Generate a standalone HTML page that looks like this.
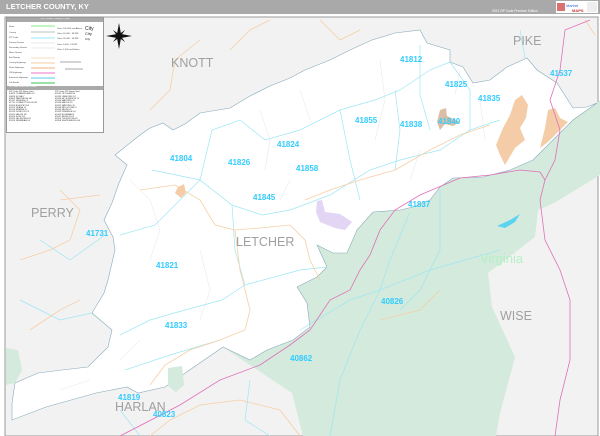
<!DOCTYPE html>
<html><head><meta charset="utf-8"><style>
*{margin:0;padding:0}
body{width:600px;height:436px;overflow:hidden;background:#fff;font-family:"Liberation Sans",sans-serif;position:relative}
#hdr{position:absolute;left:0;top:0;width:600px;height:14px;background:#a9a9a9}
#hdr .t{position:absolute;left:6px;top:2px;color:#fff;font-weight:bold;font-size:7.5px}
#hdr .e{position:absolute;left:492px;top:9px;color:#fff;font-size:3.2px}
#logo{position:absolute;left:556px;top:1px;width:42px;height:12px;background:#fff}
svg{position:absolute;left:0;top:0}
.lb{font-family:"Liberation Sans",sans-serif;font-weight:bold;fill:#33ccff;font-size:8px}
.cn{font-family:"Liberation Sans",sans-serif;fill:#a0a0a0;font-size:12.5px}
#leg{position:absolute;left:6px;top:17px;width:96px;height:114px;background:#fff;border:1px solid #999;font-size:2.2px;color:#333;overflow:hidden}
</style></head><body>
<div id="hdr"><div class="t">LETCHER COUNTY, KY</div><div class="e">2023 ZIP Code Premium Edition</div>
<div id="logo"><svg width="42" height="12"><rect x="1" y="2" width="8" height="8" fill="#c33" opacity=".7"/><text x="10" y="6" font-size="4" fill="#36c" font-style="italic">Market</text><text x="16" y="11" font-size="4" fill="#c33" font-weight="bold">MAPS</text><rect x="31" y="1" width="10" height="10" fill="#eee"/></svg></div></div>
<svg width="600" height="436" viewBox="0 0 600 436">
<rect x="5" y="17" width="593" height="419" fill="#f2f2f2" stroke="#999" stroke-width="1"/>
<polygon fill="#d3eadc" points="600,100 597,103 573,120 553,140 533,160 510,170 483,177 453,178 440,187 430,200 413,207 400,210 373,212 357,230 347,253 333,253 317,245 327,267 317,277 297,287 307,303 310,327 293,340 267,350 250,360 223,347 292,393 303,436 496,436 500,413 515,357 492,307 488,273 535,237 538,210 554,203 600,175"/>
<polygon fill="#fff" stroke="#8ab" stroke-width="0.6" points="150,128 163,123 173,130 185,124 200,113 230,108 250,96 270,86 290,78 305,70 330,60 350,50 372,40 395,33 420,30 427,43 450,50 450,62 463,67 473,83 490,80 507,67 527,58 537,70 557,83 573,108 587,107 597,103 573,120 553,140 533,160 510,170 483,177 453,178 440,187 430,200 413,207 400,210 373,212 357,230 347,253 333,253 317,245 327,267 317,277 297,287 307,303 310,327 293,340 267,350 250,360 223,347 165,387 138,393 127,387 96,393 46,407 12,420 12,403 15,383 38,373 62,370 88,367 108,347 112,330 92,313 104,293 108,280 115,250 113,237 104,220 112,203 119,183 127,165 115,155 140,135"/>
<polygon fill="#d3eadc" points="168,368 182,366 184,385 176,392 168,386"/>
<polygon fill="#d3eadc" points="6,348 18,350 22,370 15,383 6,385"/>
<polygon fill="#f4cda8" points="515,100 522,95 528,105 526,118 520,128 525,140 515,148 505,165 500,155 496,145 503,128 510,115"/>
<polygon fill="#f4cda8" points="548,110 555,108 560,118 568,122 558,132 548,142 540,148 545,128"/>
<polygon fill="#d8bfa6" points="440,110 446,108 447,116 460,122 453,126 445,124 440,130 437,122"/>
<polygon fill="#e2d6f4" points="317,201 322,200 325,212 340,214 352,222 345,230 335,228 320,222 316,212"/>
<polygon fill="#f4cda8" points="178,187 184,184 186,193 181,198 175,193"/>
<path d="M497,226 L510,220 520,214 515,222 505,228 Z" fill="#5cd3f0"/>
<g fill="none" stroke="#ddd" stroke-width="0.4">
<path d="M130,180 L150,200 L160,230 L150,260 M170,150 L190,170 M260,110 L270,140 L265,170 M300,90 L310,120 M380,60 L385,100 L375,140 M460,70 L455,95 M200,250 L210,290 L200,320 M60,390 L90,380 M120,360 L140,340 M280,200 L290,180 M420,150 L410,180 M480,100 L485,140 M350,260 L370,250 M400,260 L420,240 M430,320 L450,300 M340,380 L360,360"/>
</g>
<g fill="none" stroke="#9ee6f4" stroke-width="0.7">
<path d="M152,170 L200,180 L232,205 L262,215 L290,210 L330,195 L370,170 L400,160 L440,150 L470,130 L500,120"/>
<path d="M200,180 L212,130 L240,120 L265,140 L300,130 L340,110 L375,100 L400,90 L430,70 L450,62"/>
<path d="M232,205 L235,250 L245,285 L222,300 L185,310 L150,320 L120,335"/>
<path d="M120,235 L155,225 L200,180"/>
<path d="M245,285 L300,270 L327,267"/>
<path d="M340,110 L350,160 L360,200"/>
<path d="M395,90 L400,130 L395,170"/>
<path d="M420,45 L420,95 L430,130"/>
<path d="M450,62 L470,90 L470,130"/>
<path d="M125,370 L170,355 L220,340"/>
<path d="M410,212 L390,260 L380,290 L360,330 L340,380 L330,436"/>
<path d="M440,190 L440,250 L420,290 L400,310"/>
<path d="M300,330 L350,300 L380,290 L430,270 L500,250"/>
<path d="M40,240 L70,260 L105,235 M20,300 L60,320 L92,313"/>
<path d="M250,380 L245,420 L270,436 M120,410 L140,436"/>
<path d="M520,30 L525,58"/>
</g>
<g fill="none" stroke="#f6cfa6" stroke-width="0.8">
<path d="M140,190 L175,185 L200,200 L215,225 L235,230 L260,228 L290,225 L305,240 L310,260 L320,280"/>
<path d="M235,230 L240,270 L250,310 L245,330 L220,340 L190,350 L165,365 L150,385"/>
<path d="M305,200 L330,190 L360,180 L395,170 L430,150 L460,135 L490,125"/>
<path d="M150,110 L170,90 L175,60 L200,40 M230,50 L250,30 L270,20 M320,20 L340,40 L360,30"/>
<path d="M20,260 L50,250 L70,240 L80,210 L60,190 M30,330 L60,310 L80,300 M60,200 L100,195"/>
<path d="M300,436 L280,410 L240,400 L200,405 L170,420 L150,436"/>
<path d="M380,320 L420,310 L440,290 M585,20 L595,35"/>
</g>
<g fill="none" stroke="#e070b8" stroke-width="0.8">
<path d="M120,436 L180,405 L220,380 L260,365 L290,345 L310,330 L330,300 L350,290 L360,270 L370,255 L380,230 L395,210 L420,195 L460,178 L490,175 L520,170 L540,172 L545,180 L540,200 L545,240 L560,270 L570,300 L570,360 L560,400 L555,436"/>
<path d="M545,180 L555,160 L560,130 L550,100 L560,70 L565,30 L590,20"/>
</g>
<text class="cn" x="171" y="67">KNOTT</text>
<text class="cn" x="513" y="45">PIKE</text>
<text class="cn" x="31" y="217">PERRY</text>
<text class="cn" x="236" y="246">LETCHER</text>
<text class="cn" x="500" y="320">WISE</text>
<text class="cn" x="115" y="411">HARLAN</text>
<text x="480" y="263" font-size="13" fill="#b5f0c8" font-family="Liberation Sans,sans-serif">Virginia</text>
<g>
<text x="400" y="62" class="lb">41812</text>
<text x="445" y="87" class="lb">41825</text>
<text x="478" y="101" class="lb">41835</text>
<text x="550" y="76" class="lb">41537</text>
<text x="438" y="124" class="lb">41840</text>
<text x="400" y="127" class="lb">41838</text>
<text x="355" y="123" class="lb">41855</text>
<text x="277" y="147" class="lb">41824</text>
<text x="170" y="161" class="lb">41804</text>
<text x="228" y="165" class="lb">41826</text>
<text x="296" y="171" class="lb">41858</text>
<text x="253" y="200" class="lb">41845</text>
<text x="408" y="207" class="lb">41837</text>
<text x="86" y="236" class="lb">41731</text>
<text x="156" y="268" class="lb">41821</text>
<text x="381" y="304" class="lb">40826</text>
<text x="165" y="328" class="lb">41833</text>
<text x="290" y="361" class="lb">40862</text>
<text x="118" y="400" class="lb">41819</text>
<text x="153" y="417" class="lb">40823</text>
</g>
<g transform="translate(119,36)" fill="#111">
<polygon points="0,-13 2,-2 0,0 -2,-2"/><polygon points="0,13 2,2 0,0 -2,2"/>
<polygon points="-13,0 -2,-2 0,0 -2,2"/><polygon points="13,0 2,-2 0,0 2,2"/>
<polygon points="-6,-6 1,-1 -1,1" /><polygon points="6,6 -1,1 1,-1"/>
<polygon points="6,-6 1,1 -1,-1"/><polygon points="-6,6 -1,-1 1,1"/>
</g>
</svg>
<div id="leg">
<div style="background:#a9a9a9;height:4px;color:#fff;text-align:center">2023 Letcher County, KY Map</div>
<svg width="96" height="62" style="position:relative">
<g stroke-width="1.2" fill="none">
<line x1="24" y1="4" x2="48" y2="4" stroke="#9ef0a0"/>
<line x1="24" y1="10" x2="48" y2="10" stroke="#ccc"/>
<line x1="24" y1="16" x2="48" y2="16" stroke="#aeeefa"/>
<line x1="24" y1="21" x2="48" y2="21" stroke="#eee"/>
<line x1="24" y1="26" x2="48" y2="26" stroke="#eee"/>
<line x1="24" y1="36" x2="48" y2="36" stroke="#fbe2cc"/>
<line x1="24" y1="41" x2="48" y2="41" stroke="#f7d5b0"/>
<line x1="24" y1="46" x2="48" y2="46" stroke="#f6c296"/>
<line x1="24" y1="51" x2="48" y2="51" stroke="#f08fd0"/>
<line x1="24" y1="56" x2="48" y2="56" stroke="#7ad6ee"/>
<line x1="24" y1="61" x2="48" y2="61" stroke="#5ed17a"/>
<line x1="53" y1="40" x2="74" y2="40" stroke="#555" stroke-width=".5"/>
<line x1="58" y1="47" x2="76" y2="47" stroke="#555" stroke-width=".5"/>
</g>
<g font-size="2.2" fill="#444" font-family="Liberation Sans,sans-serif">
<text x="2" y="5">State</text><text x="2" y="11">County</text><text x="2" y="16">ZIP Code</text><text x="2" y="21">Primary Streets</text><text x="2" y="26">Secondary Streets</text><text x="2" y="31">Minor Streets</text><text x="2" y="36">Exit Ramps</text><text x="2" y="41">County Highways</text><text x="2" y="46">State Highways</text><text x="2" y="51">US Highways</text><text x="2" y="56">Interstate Highways</text><text x="2" y="61">Toll Roads</text>
<text x="50" y="7">Cities 100,000 and Above</text><text x="50" y="12">Cities 50,000 - 99,999</text><text x="50" y="17">Cities 25,000 - 49,999</text><text x="50" y="23">Cities 5,000 - 24,999</text><text x="50" y="28">Cities 1,000 and Below</text>
</g>
<g font-family="Liberation Sans,sans-serif" fill="#222"><text x="78" y="8" font-size="5">City</text><text x="78" y="13" font-size="4">City</text><text x="78" y="18" font-size="3">City</text></g>
</svg>
<div style="background:#a9a9a9;height:4px;color:#fff;padding-left:2px;margin-top:1px">ZIP Code Index/Grid Locator</div>
<div style="display:flex;line-height:2.25px;padding:1px 2px">
<div style="width:46px">ZIP Code ZIP Name Grid<br>40823 CUMBERLAND D9<br>40826 EOLIA I7<br>40862 PARTRIDGE H9<br>41537 JENKINS L3<br>41731 CORNETTSVILLE B5<br>41804 BLACKEY E4<br>41812 DEANE J1<br>41815 ERMINE I5<br>41819 GORDON C9<br>41821 HALLIE D6<br>41824 ISOM G3<br>41825 JACKHORN K2<br>41826 JEREMIAH F4</div>
<div style="width:46px">ZIP Code ZIP Name Grid<br>41832 LETCHER E4<br>41833 LINEFORK D7<br>41834 MC ROBERTS L3<br>41835 MAYKING J3<br>41836 MALLIE F2<br>41837 MAYKING J5<br>41838 MILLSTONE I3<br>41840 NEON K3<br>41843 PREMIUM G4<br>41845 ROXANA E5<br>41847 REDFOX F3<br>41855 THORNTON H3<br>41858 WHITESBURG G4</div>
</div>
</div>
</body></html>
